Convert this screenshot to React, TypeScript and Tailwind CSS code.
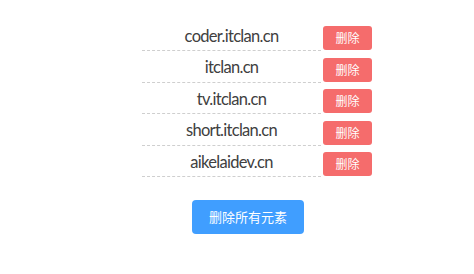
import React from "react";

const items = ["coder.itclan.cn", "itclan.cn", "tv.itclan.cn", "short.itclan.cn", "aikelaidev.cn"];

export default function App() {
  return (
    <div className="w-[474px] h-[274px] bg-white relative" style={{ fontFamily: '"Lato", "Noto Sans CJK SC", sans-serif' }}>
      <div className="w-[270px] ml-[102px]">
        <ul className="pl-[40px] pt-[19.5px] m-0 list-none">
          {items.map((t) => (
            <li key={t} className="flex items-end h-[31.5px]">
              <div className="flex-1 h-full flex items-center justify-center border-b border-dashed border-[#cfcfcf] text-[16.5px] tracking-[-0.7px] text-[#404040] pt-[3px]">
                {t}
              </div>
              <button className="ml-[2px] mb-[1px] w-[49px] h-[24px] rounded-[3px] bg-[#f56c6c] text-white text-[12px] flex items-center justify-center" style={{ fontFamily: '"Noto Sans CJK SC", sans-serif' }}>
                删除
              </button>
            </li>
          ))}
        </ul>
        <button className="mt-[23px] ml-[90px] w-[112px] h-[34px] rounded-[4px] bg-[#409eff] text-white text-[13px] flex items-center justify-center" style={{ fontFamily: '"Noto Sans CJK SC", sans-serif' }}>
          删除所有元素
        </button>
      </div>
    </div>
  );
}
